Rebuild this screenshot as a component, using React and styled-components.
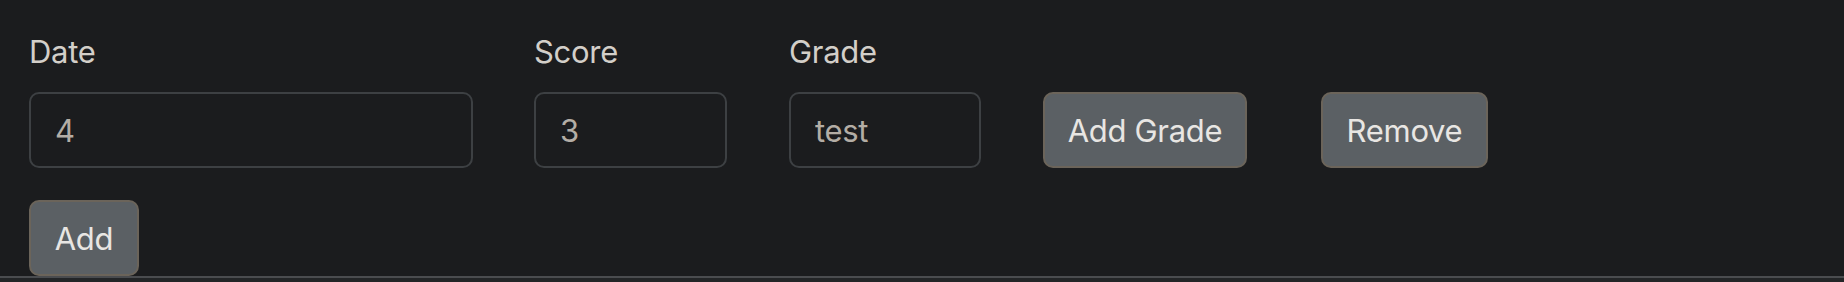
import React from 'react';
import styled, { createGlobalStyle } from 'styled-components';

const GlobalStyle = createGlobalStyle`
  html, body {
    margin: 0;
    padding: 0;
    background: #1b1c1e;
  }
  body {
    font-family: Inter, "Noto Sans", sans-serif;
  }
`;

const Page = styled.div`
  width: 1844px;
  height: 282px;
  background: #1b1c1e;
  overflow: hidden;
  display: flex;
  flex-direction: column;
`;

const Form = styled.div`
  padding: 28px 0 0 29px;
  display: flex;
  flex-direction: column;
  align-items: flex-start;
`;

const Row = styled.div`
  display: flex;
  align-items: flex-end;
`;

const Field = styled.div`
  display: flex;
  flex-direction: column;
  width: ${p => p.width}px;
  margin-right: ${p => p.gap || 0}px;
`;

const Label = styled.label`
  font-size: 31px;
  line-height: 48px;
  color: #d3cfc9;
  margin-bottom: 16px;
  letter-spacing: -0.3px;
`;

const Input = styled.input`
  box-sizing: border-box;
  width: 100%;
  height: 76px;
  padding: 0 24px;
  font-family: inherit;
  font-size: 31px;
  letter-spacing: -0.3px;
  color: #b3ada5;
  background: #1b1c1e;
  border: 2px solid #3d4043;
  border-radius: 10px;
  outline: none;
`;

const Button = styled.button`
  box-sizing: border-box;
  height: 76px;
  padding: 0;
  white-space: nowrap;
  text-align: center;
  font-family: inherit;
  font-size: 31px;
  letter-spacing: -0.3px;
  color: #e8e6e3;
  background: #5b6064;
  border: 2px solid #6b645a;
  border-radius: 10px;
  margin-left: ${p => p.offset || 0}px;
  margin-top: ${p => p.top || 0}px;
  width: ${p => p.width}px;
`;

const Divider = styled.div`
  border-top: 2px solid #4a4c4f;
  background: #232527;
  flex: 1;
`;

export default function App() {
  return (
    <Page>
      <GlobalStyle />
      <Form>
        <Row>
          <Field width={444} gap={61}>
            <Label>Date</Label>
            <Input defaultValue="4" />
          </Field>
          <Field width={193} gap={62}>
            <Label>Score</Label>
            <Input defaultValue="3" />
          </Field>
          <Field width={192} gap={62}>
            <Label>Grade</Label>
            <Input defaultValue="test" />
          </Field>
          <Button width={204}>Add Grade</Button>
          <Button width={167} offset={74}>Remove</Button>
        </Row>
        <Button width={110} top={32}>Add</Button>
      </Form>
      <Divider />
    </Page>
  );
}
